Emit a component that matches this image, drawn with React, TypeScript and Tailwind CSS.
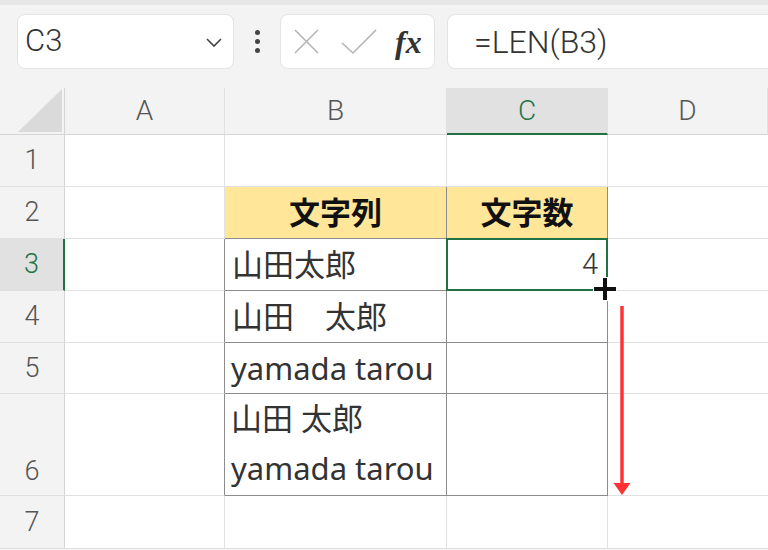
import React from "react";

const cols = [
  { key: "A", w: "w-[160px]" },
  { key: "B", w: "w-[222px]" },
  { key: "C", w: "w-[161px]" },
  { key: "D", w: "w-[160px]" },
];

const cellFont = { fontFamily: '"Noto Sans", "Noto Sans CJK JP", sans-serif' };

function RowHeader({ n, active, h, bottom }: { n: number; active?: boolean; h: string; bottom?: boolean }) {
  return (
    <div
      className={`w-[65px] shrink-0 ${h} flex justify-center border-b border-[#e1e1e1] text-[27px] font-light ${
        bottom ? "items-end pb-[4px]" : "items-center"
      } ${active ? "bg-[#e1e1e1] text-[#217346] border-r-2 border-r-[#217346]" : "bg-[#f3f3f3] text-[#555] border-r border-r-[#d4d4d4]"}`}
    >
      {n}
    </div>
  );
}

export default function App() {
  return (
    <div className="w-[768px] h-[550px] overflow-hidden bg-[#f3f3f3] font-['Roboto',sans-serif] relative">
      <div className="h-[5px] bg-[#e6e6e6]" />

      {/* toolbar */}
      <div className="flex items-center h-[64px] pt-[9px] pl-[17px]">
        <div className="w-[217px] h-[55px] bg-white rounded-[8px] border border-[#e4e4e4] flex items-center justify-between pl-[7px] pr-[10px]">
          <span className="text-[31px] font-light text-[#333]">C3</span>
          <svg width="18" height="12" viewBox="0 0 18 12" className="mt-[2px]">
            <path d="M2 2 L9 9 L16 2" fill="none" stroke="#444" strokeWidth="1.6" />
          </svg>
        </div>
        <div className="w-[46px] flex flex-col items-center gap-[4px]">
          <span className="w-[5px] h-[5px] rounded-full bg-[#444]" />
          <span className="w-[5px] h-[5px] rounded-full bg-[#444]" />
          <span className="w-[5px] h-[5px] rounded-full bg-[#444]" />
        </div>
        <div className="w-[155px] h-[55px] bg-white rounded-[8px] border border-[#e4e4e4] flex items-center pl-[12px]">
          <svg width="27" height="27" viewBox="0 0 27 27">
            <path d="M2 2 L25 25 M25 2 L2 25" stroke="#b4b4b4" strokeWidth="1.6" fill="none" />
          </svg>
          <svg width="36" height="26" viewBox="0 0 36 26" className="ml-[21px]">
            <path d="M1 14 L12 24 L35 1" stroke="#b4b4b4" strokeWidth="1.6" fill="none" />
          </svg>
          <span className="ml-[18px] text-[32px] italic font-bold text-[#333] font-['Liberation_Serif',serif] leading-none">
            fx
          </span>
        </div>
        <div className="ml-[12px] flex-1 h-[55px] bg-white rounded-l-[8px] border border-r-0 border-[#e4e4e4] flex items-center pl-[26px]">
          <span className="text-[32px] font-light text-[#333]">=LEN(B3)</span>
        </div>
      </div>

      {/* sheet */}
      <div className="mt-[19px]">
        {/* column headers */}
        <div className="flex h-[47px]">
          <div className="w-[65px] shrink-0 bg-[#f3f3f3] border-r border-[#d4d4d4] border-b border-b-[#d4d4d4] relative">
            <svg width="44" height="43" viewBox="0 0 44 43" className="absolute left-[18px] top-[1px]">
              <path d="M44 0 L44 43 L0 43 Z" fill="#dadada" />
            </svg>
          </div>
          {cols.map((c) => (
            <div
              key={c.key}
              className={`${c.w} shrink-0 flex items-center justify-center text-[28px] font-light ${
                c.key === "C"
                  ? "bg-[#e1e1e1] text-[#217346] border-b-2 border-b-[#217346]"
                  : "bg-[#f3f3f3] text-[#555] border-b border-b-[#d4d4d4]"
              } border-r border-r-[#e1e1e1]`}
            >
              {c.key}
            </div>
          ))}
        </div>

        {/* row 1 */}
        <div className="flex">
          <RowHeader n={1} h="h-[52px]" />
          <div className="w-[160px] h-[52px] bg-white border-r border-b border-[#e1e1e1]" />
          <div className="w-[222px] h-[52px] bg-white border-r border-b border-[#e1e1e1]" />
          <div className="w-[161px] h-[52px] bg-white border-r border-b border-[#e1e1e1]" />
          <div className="w-[160px] h-[52px] bg-white border-b border-[#e1e1e1]" />
        </div>

        {/* row 2 */}
        <div className="flex">
          <RowHeader n={2} h="h-[52px]" />
          <div className="w-[160px] h-[52px] bg-white border-r border-b border-[#e1e1e1]" />
          <div
            className="w-[222px] h-[52px] bg-[#ffe699] border-r border-b border-[#8c8c8c] flex items-center justify-center text-[31px] font-bold text-[#111]"
            style={cellFont}
          >
            文字列
          </div>
          <div
            className="w-[161px] h-[52px] bg-[#ffe699] border-r border-b border-[#8c8c8c] flex items-center justify-center text-[31px] font-bold text-[#111]"
            style={cellFont}
          >
            文字数
          </div>
          <div className="w-[160px] h-[52px] bg-white border-b border-[#e1e1e1]" />
        </div>

        {/* row 3 */}
        <div className="flex">
          <RowHeader n={3} h="h-[52px]" active />
          <div className="w-[160px] h-[52px] bg-white border-r border-b border-[#e1e1e1] border-r-[#8c8c8c]" />
          <div
            className="w-[222px] h-[52px] bg-white border-r border-b border-[#8c8c8c] flex items-center pl-[7px] text-[31px] text-[#333]"
            style={cellFont}
          >
            山田太郎
          </div>
          <div className="w-[161px] h-[52px] bg-white border-r border-b border-[#8c8c8c] flex items-center justify-end pr-[9px] text-[29px] font-light text-[#333] relative">
            4
            <div className="absolute -left-[1px] -top-[1px] -right-[1px] -bottom-[1px] border-2 border-[#217346]" />
          </div>
          <div className="w-[160px] h-[52px] bg-white border-b border-[#e1e1e1]" />
        </div>

        {/* row 4 */}
        <div className="flex">
          <RowHeader n={4} h="h-[52px]" />
          <div className="w-[160px] h-[52px] bg-white border-r border-b border-[#e1e1e1] border-r-[#8c8c8c]" />
          <div
            className="w-[222px] h-[52px] bg-white border-r border-b border-[#8c8c8c] flex items-center pl-[7px] text-[31px] text-[#333] whitespace-pre"
            style={cellFont}
          >
            山田　太郎
          </div>
          <div className="w-[161px] h-[52px] bg-white border-r border-b border-[#8c8c8c]" />
          <div className="w-[160px] h-[52px] bg-white border-b border-[#e1e1e1]" />
        </div>

        {/* row 5 */}
        <div className="flex">
          <RowHeader n={5} h="h-[51px]" />
          <div className="w-[160px] h-[51px] bg-white border-r border-b border-[#e1e1e1] border-r-[#8c8c8c]" />
          <div
            className="w-[222px] h-[51px] bg-white border-r border-b border-[#8c8c8c] flex items-center pl-[6px] text-[31px] text-[#333] whitespace-pre"
            style={cellFont}
          >
            yamada tarou
          </div>
          <div className="w-[161px] h-[51px] bg-white border-r border-b border-[#8c8c8c]" />
          <div className="w-[160px] h-[51px] bg-white border-b border-[#e1e1e1]" />
        </div>

        {/* row 6 */}
        <div className="flex">
          <RowHeader n={6} h="h-[102px]" bottom />
          <div className="w-[160px] h-[102px] bg-white border-r border-b border-[#e1e1e1] border-r-[#8c8c8c]" />
          <div
            className="w-[222px] h-[102px] bg-white border-r border-b border-[#8c8c8c] flex flex-col justify-end pl-[6px] pb-[2px] text-[31px] leading-[50px] text-[#333] whitespace-pre"
            style={cellFont}
          >
            <span>山田 太郎</span>
            <span>yamada tarou</span>
          </div>
          <div className="w-[161px] h-[102px] bg-white border-r border-b border-[#8c8c8c]" />
          <div className="w-[160px] h-[102px] bg-white border-b border-[#e1e1e1]" />
        </div>

        {/* row 7 */}
        <div className="flex">
          <RowHeader n={7} h="h-[53px]" />
          <div className="w-[160px] h-[53px] bg-white border-r border-b border-[#e1e1e1]" />
          <div className="w-[222px] h-[53px] bg-white border-r border-b border-[#e1e1e1]" />
          <div className="w-[161px] h-[53px] bg-white border-r border-b border-[#e1e1e1]" />
          <div className="w-[160px] h-[53px] bg-white border-b border-[#e1e1e1]" />
        </div>
      </div>

      {/* fill handle cursor */}
      <svg width="28" height="28" viewBox="0 0 28 28" className="absolute left-[591px] top-[275px]">
        <path d="M14 2 V26 M2 14 H26" stroke="#fff" strokeWidth="7" />
        <path d="M14 3 V25 M3 14 H25" stroke="#111" strokeWidth="4" />
      </svg>

      {/* red arrow */}
      <svg width="20" height="190" viewBox="0 0 20 190" className="absolute left-[612px] top-[306px]">
        <path d="M10 0 V178" stroke="#ff3333" strokeWidth="3.5" />
        <path d="M1.5 177 L18.5 177 L10 189 Z" fill="#ff3333" />
      </svg>
    </div>
  );
}
